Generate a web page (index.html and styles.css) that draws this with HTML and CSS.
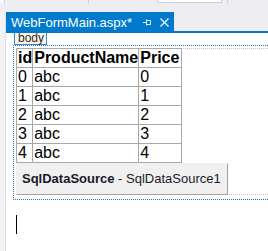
FILE: index.html
```html
<!DOCTYPE html>
<html>
<head>
<meta charset="utf-8">
<link rel="stylesheet" href="styles.css">
</head>
<body>
<div class="toolbar">
  <div class="tb-left"></div>
  <div class="tb-sep tb-sep1"></div>
  <div class="tb-box"></div>
  <div class="tb-sep tb-sep2"></div>
</div>
<div class="frame">
  <div class="gutter"></div>
  <div class="editor">
    <div class="tabrow">
      <div class="tab">
        <span class="tab-title">WebFormMain.aspx*</span>
        <svg class="pin" width="8" height="7" viewBox="0 0 8 7">
          <path d="M0 3.5H3.5M3.5 0.5V6.5M3.5 1.5H7.5V5.5H3.5" fill="none" stroke="#e6f1fa" stroke-width="1"/>
        </svg>
        <svg class="close" width="9" height="9" viewBox="0 0 9 9">
          <path d="M0.5 0.5L8.5 8.5M8.5 0.5L0.5 8.5" fill="none" stroke="#e6f1fa" stroke-width="1.4"/>
        </svg>
      </div>
    </div>
    <div class="tabline"></div>
    <div class="surface">
      <div class="tagname">body</div>
      <div class="bodybox">
        <div class="formdiv">
          <table class="grid">
            <tr class="head"><th class="c-id">id</th><th class="c-name">ProductName</th><th class="c-price">Price</th></tr>
            <tr><td>0</td><td>abc</td><td>0</td></tr>
            <tr><td>1</td><td>abc</td><td>1</td></tr>
            <tr><td>2</td><td>abc</td><td>2</td></tr>
            <tr><td>3</td><td>abc</td><td>3</td></tr>
            <tr><td>4</td><td>abc</td><td>4</td></tr>
          </table>
          <div class="datasource"><b>SqlDataSource</b> - SqlDataSource1</div>
        </div>
      </div>
      <div class="caret"></div>
    </div>
  </div>
</div>
</body>
</html>
```
FILE: styles.css
```css
html, body {
  margin: 0;
  padding: 0;
}
body {
  width: 268px;
  height: 251px;
  overflow: hidden;
  background: #eeeef2;
  font-family: "Liberation Sans", Arial, sans-serif;
}
.toolbar {
  height: 12px;
  display: flex;
  align-items: flex-start;
  background: #eeeef2;
}
.tb-left {
  width: 4px;
  height: 3px;
  background: #fcfcfc;
  border-right: 1px solid #cccedb;
}
.tb-sep {
  width: 1px;
  height: 3px;
  background: #cccedb;
}
.tb-sep1 { margin-left: 83px; }
.tb-box {
  margin-left: 68px;
  width: 63px;
  height: 2px;
  background: #ffffff;
  border: 1px solid #cccedb;
  border-top: none;
}
.tb-sep2 { margin-left: 5px; }
.frame {
  display: flex;
  height: 239px;
}
.gutter {
  width: 5px;
  background: #f3f3f6;
  border-right: 1px solid #dedee8;
}
.editor {
  flex: 1;
  display: flex;
  flex-direction: column;
  min-width: 0;
}
.tabrow {
  height: 19px;
  display: flex;
  background: #eeeef2;
}
.tab {
  width: 168px;
  height: 19px;
  background: #007acc;
  color: #ffffff;
  display: flex;
  align-items: center;
  font-size: 13px;
}
.tab-title {
  margin-left: 5px;
  line-height: 19px;
  padding-top: 1px;
}
.pin {
  margin-left: 11px;
  margin-top: 1px;
}
.close {
  margin-left: 9px;
  margin-top: 1px;
}
.tabline {
  height: 2px;
  background: #007acc;
}
.surface {
  flex: 1;
  background: #ffffff;
  display: flex;
  flex-direction: column;
  align-items: flex-start;
}
.tagname {
  margin-left: 8px;
  height: 11px;
  padding: 0 2px 0 3px;
  font-size: 12px;
  line-height: 10px;
  color: #2a2a2a;
  background: #fdf6e8;
  border: 1px solid #3d85d6;
  border-top: none;
}
.bodybox {
  align-self: stretch;
  margin-left: 7px;
  padding: 2px 0 4px 2px;
  border-top: 1px dotted #2f6fc4;
  border-left: 1px dotted #2f6fc4;
  border-bottom: 1px dotted #2f6fc4;
}
.formdiv {
  position: relative;
}
.formdiv::after {
  content: "";
  position: absolute;
  left: 0;
  top: 0;
  right: -4px;
  bottom: 0;
  border: 1px dotted #c4c4c4;
  z-index: 0;
}
.grid {
  position: relative;
  z-index: 1;
  border-collapse: collapse;
  background: #ffffff;
  font-size: 16px;
  color: #000000;
}
.grid th, .grid td {
  border: 1px solid #a8a8a8;
  height: 18px;
  line-height: 18px;
  padding: 0 0 0 1px;
  text-align: left;
  vertical-align: middle;
  box-sizing: border-box;
}
.grid th {
  font-weight: bold;
}
.c-id { width: 16px; }
.c-name { width: 106px; }
.c-price { width: 43px; }
.datasource {
  position: relative;
  z-index: 1;
  width: 205px;
  height: 30px;
  padding-left: 5px;
  background: #f0f0f0;
  border-top: 1px solid #f0f0f0;
  border-left: 1px solid #f0f0f0;
  border-right: 1px solid #a0a0a0;
  border-bottom: 1px solid #a0a0a0;
  font-size: 13px;
  line-height: 30px;
  color: #1a1a2a;
  white-space: nowrap;
}
.caret {
  margin-left: 10px;
  margin-top: 15px;
  width: 1px;
  height: 19px;
  background: #000000;
}
```
